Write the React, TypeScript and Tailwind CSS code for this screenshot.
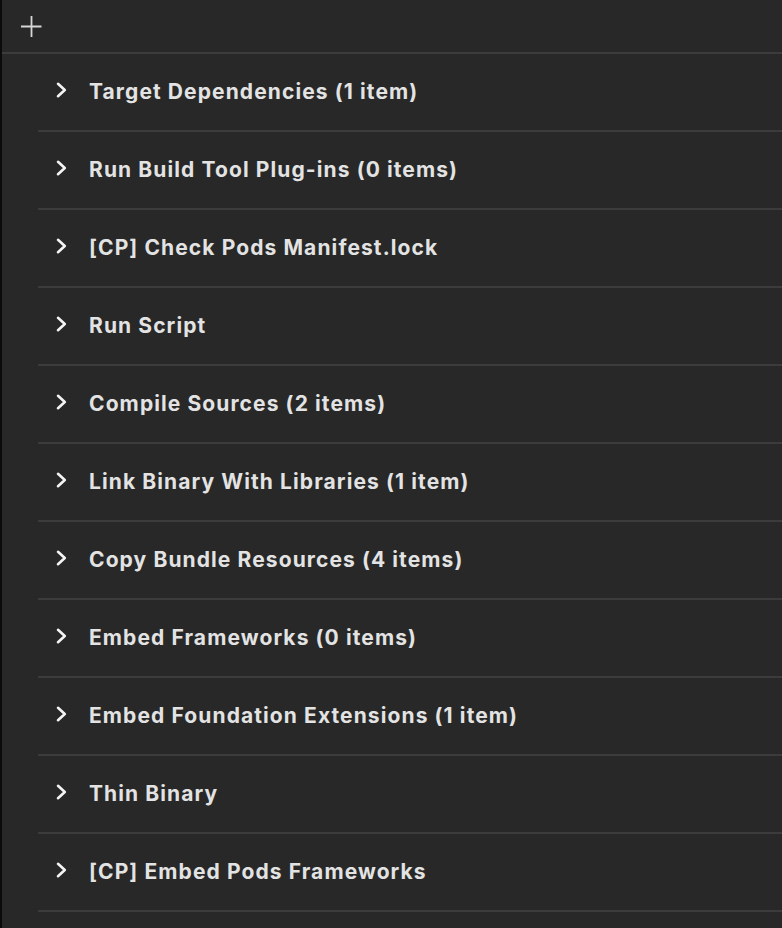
import React from "react";

const rows = [
  "Target Dependencies (1 item)",
  "Run Build Tool Plug-ins (0 items)",
  "[CP] Check Pods Manifest.lock",
  "Run Script",
  "Compile Sources (2 items)",
  "Link Binary With Libraries (1 item)",
  "Copy Bundle Resources (4 items)",
  "Embed Frameworks (0 items)",
  "Embed Foundation Extensions (1 item)",
  "Thin Binary",
  "[CP] Embed Pods Frameworks",
];

function Chevron() {
  return (
    <svg width="13" height="18" viewBox="0 0 13 18" fill="none">
      <path d="M3 2.8 L9.8 9 L3 15.2" stroke="#f4f4f4" strokeWidth="2.6" strokeLinecap="round" strokeLinejoin="round" />
    </svg>
  );
}

export default function App() {
  return (
    <div className="w-[782px] h-[928px] flex bg-[#272827] overflow-hidden" style={{ fontFamily: "Inter, 'Noto Sans', sans-serif" }}>
      <div className="w-[2px] bg-[#0b0b0b] shrink-0" />
      <div className="flex-1 flex flex-col">
        <div className="h-[54px] shrink-0 flex items-center pl-[17px] border-b-2 border-[#3b3c3b]">
          <svg width="24" height="24" viewBox="0 0 24 24" fill="none">
            <path d="M12.5 2 V23 M2 12.5 H22.5" stroke="#d6d6d6" strokeWidth="1.8" />
          </svg>
        </div>
        <div className="pl-[36px]">
          {rows.map((r) => (
            <div key={r} className="h-[78px] flex items-center border-b-2 border-[#3b3c3b]">
              <div className="w-[51px] flex items-center pl-[17px] pb-[4px]">
                <Chevron />
              </div>
              <span className="text-[21px] font-bold text-[#e3e3e3] tracking-[1.1px]">{r}</span>
            </div>
          ))}
        </div>
      </div>
    </div>
  );
}
